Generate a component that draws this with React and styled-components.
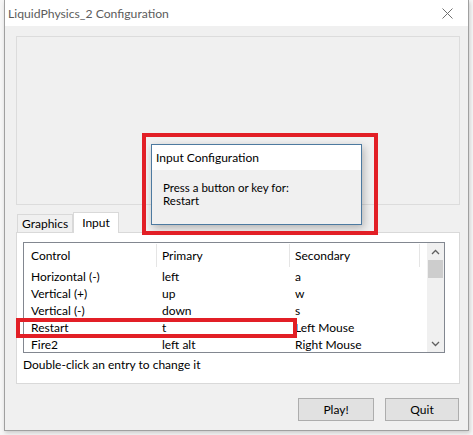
import styled, { createGlobalStyle } from "styled-components";

const Global = createGlobalStyle`
  html, body {
    margin: 0;
    padding: 0;
    background: #f6f6f6;
  }
  body {
    font-family: Lato, "Noto Sans", sans-serif;
    font-size: 12px;
    color: #000;
  }
`;

const Page = styled.div`
  position: relative;
  width: 473px;
  height: 435px;
  overflow: hidden;
`;

const Window = styled.div`
  margin-left: 4px;
  width: 463px;
  height: 430px;
  border: 1px solid #a0a0a0;
  border-top: none;
  background: #f0f0f0;
  box-shadow: 1px 2px 4px rgba(0, 0, 0, 0.18);
  display: flex;
  flex-direction: column;
`;

const TitleBar = styled.div`
  height: 26px;
  background: #fff;
  display: flex;
  align-items: center;
  justify-content: space-between;
  padding: 0 15px 0 3px;
`;

const Title = styled.span`
  font-size: 12.2px;
  color: #5c5c5c;
`;

const Body = styled.div`
  flex: 1;
  padding: 10px 8px 0 11px;
  display: flex;
  flex-direction: column;
`;

const Preview = styled.div`
  height: 167px;
  border: 1px solid #dcdcdc;
  background: #f0f0f0;
`;

const TabStrip = styled.div`
  display: flex;
  align-items: flex-end;
  margin-top: 7px;
  padding-left: 1px;
  height: 20px;
`;

const Tab = styled.div`
  height: ${(p) => (p.$active ? "20px" : "17px")};
  padding: 0 ${(p) => (p.$active ? "8px" : "4px")};
  background: ${(p) => (p.$active ? "#fff" : "#f0f0f0")};
  border: 1px solid #d9d9d9;
  border-bottom: none;
  margin-bottom: ${(p) => (p.$active ? "-1px" : "0")};
  position: relative;
  display: flex;
  align-items: center;
  line-height: 1;
`;

const TabPanel = styled.div`
  height: 141px;
  background: #fff;
  border: 1px solid #d9d9d9;
  padding: 9px 14px 0 6px;
  display: flex;
  flex-direction: column;
`;

const ListBox = styled.div`
  height: 109px;
  flex-shrink: 0;
  border: 1px solid #828790;
  display: flex;
  overflow: hidden;
`;

const Table = styled.div`
  flex: 1;
  display: flex;
  flex-direction: column;
`;

const Header = styled.div`
  height: 25px;
  flex-shrink: 0;
  display: grid;
  grid-template-columns: 133px 133px 130px 1fr;
`;

const HeadCell = styled.div`
  display: flex;
  align-items: center;
  padding-left: ${(p) => p.$pad || 5}px;
  border-right: ${(p) => (p.$last ? "none" : "1px solid #e5e5e5")};
  margin: 1px 0;
`;

const Row = styled.div`
  height: 17px;
  flex-shrink: 0;
  display: grid;
  grid-template-columns: 133px 133px 1fr;
  align-items: center;
`;

const Cell = styled.div`
  padding-left: ${(p) => p.$pad || 5}px;
  white-space: nowrap;
`;

const Scrollbar = styled.div`
  width: 17px;
  background: #f0f0f0;
  display: flex;
  flex-direction: column;
  align-items: center;
`;

const Arrow = styled.div`
  height: 17px;
  display: flex;
  align-items: center;
  justify-content: center;
`;

const Thumb = styled.div`
  width: 15px;
  height: 18px;
  background: #cdcdcd;
`;

const Spacer = styled.div`
  flex: 1;
`;

const Status = styled.div`
  height: 22px;
  display: flex;
  align-items: center;
`;

const Buttons = styled.div`
  display: flex;
  justify-content: flex-end;
  gap: 11px;
  margin-top: 14px;
  padding-right: 1px;
`;

const Button = styled.button`
  width: ${(p) => p.$w}px;
  height: 23px;
  background: #e1e1e1;
  border: 1px solid #adadad;
  font-family: inherit;
  font-size: 12px;
  color: #000;
  padding: 0;
`;

const Dialog = styled.div`
  position: absolute;
  left: 151px;
  top: 144px;
  width: 209px;
  height: 79px;
  border: 1px solid #4d7aa0;
  background: #f0f0f0;
  box-shadow: 2px 3px 8px rgba(0, 0, 0, 0.25);
  display: flex;
  flex-direction: column;
`;

const DialogTitle = styled.div`
  height: 25px;
  background: #fff;
  display: flex;
  align-items: center;
  padding-left: 4px;
  font-size: 12px;
`;

const DialogText = styled.div`
  padding: 11px 0 0 11px;
  font-size: 11.5px;
`;

const Line = styled.div`
  height: 13px;
  line-height: 13px;
`;

const Mark = styled.div`
  position: absolute;
  left: ${(p) => p.$x}px;
  top: ${(p) => p.$y}px;
  width: ${(p) => p.$w}px;
  height: ${(p) => p.$h}px;
  border: 4px solid #e21f26;
  box-sizing: border-box;
  pointer-events: none;
`;

const rows = [
  ["Horizontal (-)", "left", "a"],
  ["Vertical (+)", "up", "w"],
  ["Vertical (-)", "down", "s"],
  ["Restart", "t", "Left Mouse"],
  ["Fire2", "left alt", "Right Mouse"],
];

function Chevron({ down }) {
  return (
    <svg width="9" height="6" viewBox="0 0 9 6">
      <path
        d={down ? "M1 1 L4.5 4.5 L8 1" : "M1 5 L4.5 1.5 L8 5"}
        fill="none"
        stroke="#606060"
        strokeWidth="1.3"
      />
    </svg>
  );
}

export default function App() {
  return (
    <Page>
      <Global />
      <Window>
        <TitleBar>
          <Title>LiquidPhysics_2 Configuration</Title>
          <svg width="11" height="11" viewBox="0 0 11 11">
            <path d="M0.5 0.5 L10.5 10.5 M10.5 0.5 L0.5 10.5" stroke="#707070" strokeWidth="1" />
          </svg>
        </TitleBar>
        <Body>
          <Preview />
          <TabStrip>
            <Tab>Graphics</Tab>
            <Tab $active>Input</Tab>
          </TabStrip>
          <TabPanel>
            <ListBox>
              <Table>
                <Header>
                  <HeadCell $pad={7}>Control</HeadCell>
                  <HeadCell>Primary</HeadCell>
                  <HeadCell>Secondary</HeadCell>
                  <HeadCell $last />
                </Header>
                {rows.map((r) => (
                  <Row key={r[0]}>
                    <Cell $pad={7}>{r[0]}</Cell>
                    <Cell>{r[1]}</Cell>
                    <Cell>{r[2]}</Cell>
                  </Row>
                ))}
              </Table>
              <Scrollbar>
                <Arrow>
                  <Chevron />
                </Arrow>
                <Thumb />
                <Spacer />
                <Arrow>
                  <Chevron down />
                </Arrow>
              </Scrollbar>
            </ListBox>
            <Status>Double-click an entry to change it</Status>
          </TabPanel>
          <Buttons>
            <Button $w={76}>Play!</Button>
            <Button $w={74}>Quit</Button>
          </Buttons>
        </Body>
      </Window>

      <Dialog>
        <DialogTitle>Input Configuration</DialogTitle>
        <DialogText>
          <Line>Press a button or key for:</Line>
          <Line>Restart</Line>
        </DialogText>
      </Dialog>

      <Mark $x={142} $y={133} $w={236} $h={102} />
      <Mark $x={16} $y={318} $w={281} $h={20} />
    </Page>
  );
}
